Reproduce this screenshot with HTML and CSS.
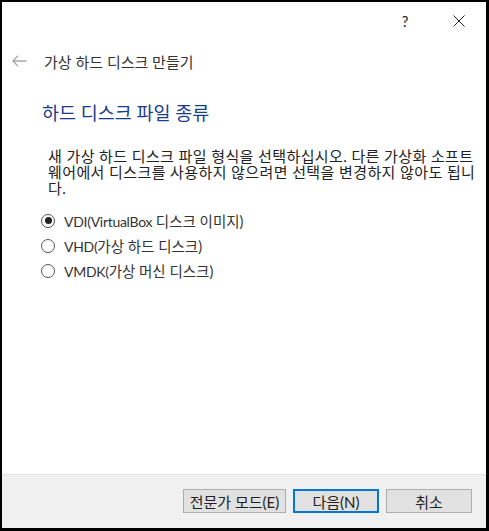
FILE: index.html
```html
<!DOCTYPE html>
<html lang="ko">
<head>
    <meta charset="UTF-8">
    <meta name="viewport" content="width=device-width, initial-scale=1.0">
    <title>가상 하드 디스크 만들기</title>
    <link rel="stylesheet" href="styles.css">
</head>
<body>
    <div class="window">
        <div class="titlebar">
            <span class="caption-btn help">?</span>
            <span class="caption-btn close">
                <svg width="12" height="12" viewBox="0 0 12 12">
                    <path d="M0.5 0.5 L11.5 11.5 M11.5 0.5 L0.5 11.5" stroke="#222" stroke-width="1" fill="none"/>
                </svg>
            </span>
        </div>

        <div class="nav-row">
            <span class="back">
                <svg width="15" height="12" viewBox="0 0 15 12">
                    <path d="M6 0.7 L0.9 6 L6 11.3 M0.9 6 L14.5 6" stroke="#a8a8a8" stroke-width="1.3" fill="none"/>
                </svg>
            </span>
            <span class="wizard-title">가상 하드 디스크 만들기</span>
        </div>

        <div class="content">
            <h1 class="heading">하드 디스크 파일 종류</h1>
            <p class="desc">새 가상 하드 디스크 파일 형식을 선택하십시오. 다른 가상화 소프트웨어에서 디스크를 사용하지 않으려면 선택을 변경하지 않아도 됩니다.</p>

            <div class="options">
                <label class="option">
                    <span class="radio checked"></span>
                    <span><span class="latin">VDI(VirtualBox</span> 디스크 이미지)</span>
                </label>
                <label class="option">
                    <span class="radio"></span>
                    <span><span class="latin">VHD(</span>가상 하드 디스크)</span>
                </label>
                <label class="option">
                    <span class="radio"></span>
                    <span><span class="latin">VMDK(</span>가상 머신 디스크)</span>
                </label>
            </div>
        </div>

        <div class="footer">
            <button class="btn expert">전문가 모드(E)</button>
            <button class="btn default">다음(N)</button>
            <button class="btn cancel">취소</button>
        </div>
    </div>
</body>
</html>
```

FILE: styles.css
```css
* {
    box-sizing: border-box;
}

body {
    margin: 0;
    font-family: Lato, "Noto Sans CJK KR", sans-serif;
    font-size: 15px;
    color: #222;
    background: #000;
}

.window {
    height: 531px;
    border-style: solid;
    border-color: #000;
    border-width: 2px 3px 3px 2px;
    background: #fff;
    display: flex;
    flex-direction: column;
}

.titlebar {
    height: 38px;
    display: flex;
    justify-content: flex-end;
    align-items: center;
}

.caption-btn {
    width: 54px;
    height: 38px;
    display: flex;
    justify-content: center;
    align-items: center;
    color: #222;
}

.help {
    font-size: 15px;
}

.nav-row {
    height: 42px;
    display: flex;
    align-items: center;
    padding-left: 10px;
}

.back {
    width: 32px;
    display: flex;
    align-items: center;
}

.wizard-title {
    color: #333;
}

.content {
    padding: 0 10px 0 40px;
    flex: 1;
}

.heading {
    margin: 19px 0 0 0;
    font-size: 18.5px;
    line-height: 24px;
    font-weight: normal;
    color: #1a3c8e;
}

.desc {
    margin: 23px 0 0 6px;
    width: 430px;
    line-height: 16px;
    letter-spacing: 0.4px;
    color: #222;
}

.options {
    margin-top: 12px;
}

.option {
    height: 25px;
    display: flex;
    align-items: center;
    font-size: 14.5px;
    color: #333;
}

.latin {
    font-size: 14px;
    letter-spacing: -0.3px;
}

.radio {
    flex: none;
    width: 14px;
    height: 14px;
    border: 1px solid #555;
    border-radius: 50%;
    margin: 0 9px 0 -1px;
    display: flex;
    justify-content: center;
    align-items: center;
}

.radio.checked::after {
    content: "";
    width: 7px;
    height: 7px;
    border-radius: 50%;
    background: #222;
}

.footer {
    border-top: 1px solid #dfdfdf;
    background: #f0f0f0;
    padding: 14px 14px 15px 0;
    display: flex;
    justify-content: flex-end;
    gap: 7px;
}

.btn {
    height: 24px;
    font-family: inherit;
    font-size: 15px;
    color: #222;
    background: #e1e1e1;
    border: 1px solid #adadad;
    padding: 0;
}

.expert {
    width: 103px;
}

.default {
    width: 86px;
    border: 2px solid #0078d7;
}

.cancel {
    width: 86px;
}
```
